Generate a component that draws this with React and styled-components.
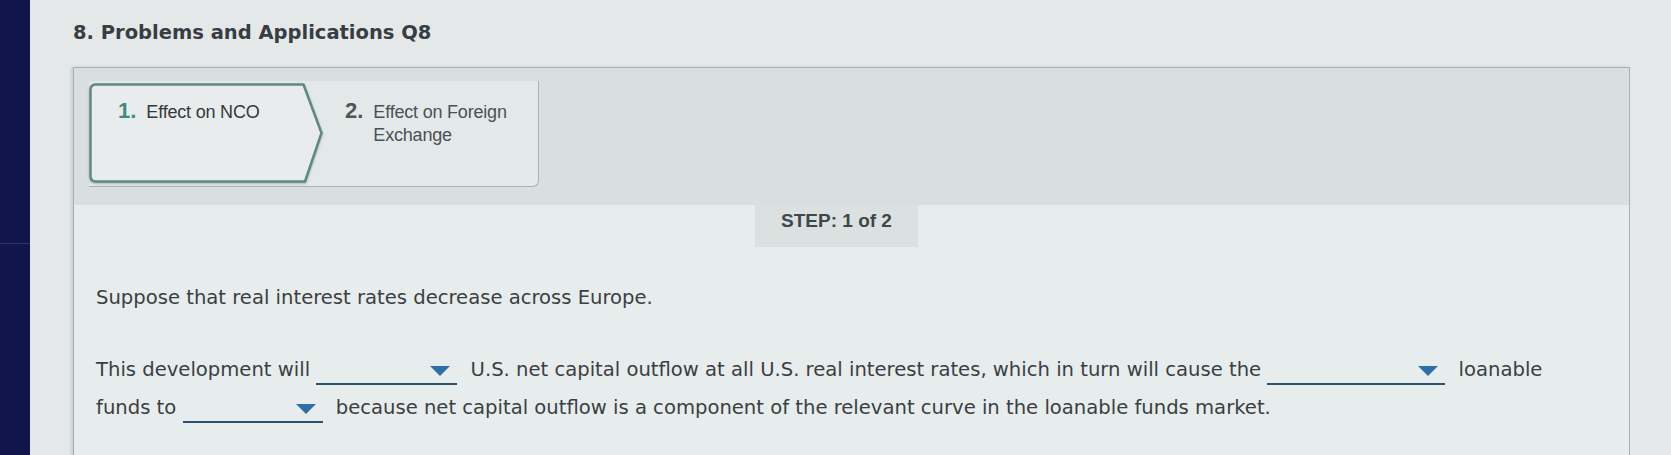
import React from "react";
import styled, { createGlobalStyle } from "styled-components";

const GlobalStyle = createGlobalStyle`
    body {
        margin: 0;
        background: #e4e8e8;
        font-family: "DejaVu Sans", Verdana, sans-serif;
    }
`;

const Page = styled.div`
    display: flex;
    height: 455px;
    overflow: hidden;
`;

const Sidebar = styled.div`
    width: 30px;
    flex-shrink: 0;
    background: #10164a;
    position: relative;

    &::after {
        content: "";
        position: absolute;
        left: 0;
        right: 0;
        top: 243px;
        height: 1px;
        background: #2c3566;
    }
`;

const Main = styled.div`
    flex: 1;
    padding: 21px 41px 0 43px;
    background: #e4e8e8;
`;

const Title = styled.h1`
    margin: 0;
    font-size: 19.5px;
    line-height: 24px;
    font-weight: bold;
    color: #383d42;
`;

const Panel = styled.div`
    margin-top: 22px;
    border: 1px solid #a9b2b2;
    background: #e7ecec;
    box-shadow: -2px 0 3px rgba(0, 0, 0, 0.12);
    min-height: 400px;
`;

const Header = styled.div`
    background: #d9dfdf;
    padding: 13px 0 18px 15px;
`;

const TabStrip = styled.div`
    display: flex;
    width: 450px;
    height: 106px;
    box-sizing: border-box;
    background: #e3e8e8;
    border-right: 1px solid #aab2b2;
    border-bottom: 1px solid #aab2b2;
    border-bottom-right-radius: 6px;
`;

const Tab = styled.div`
    position: relative;
    width: ${(p) => (p.$active ? "235px" : "auto")};
    height: 100px;
    margin-top: 2px;
    margin-left: ${(p) => (p.$active ? "0" : "21px")};
    padding: ${(p) => (p.$active ? "17px 0 0 29px" : "17px 0 0 0")};
    box-sizing: border-box;
    display: flex;
    align-items: flex-start;
`;

const TabShape = styled.svg`
    position: absolute;
    left: 0;
    top: 0;
    filter: drop-shadow(0 1px 1px rgba(0, 0, 0, 0.25));
`;

const TabNum = styled.span`
    position: relative;
    font-family: "Liberation Sans", Arial, sans-serif;
    font-weight: bold;
    font-size: 22px;
    line-height: 22px;
    color: ${(p) => (p.$active ? "#3f8a7d" : "#4f5457")};
    margin-right: 10px;
    white-space: nowrap;
`;

const TabLabel = styled.span`
    position: relative;
    font-family: "Liberation Sans", Arial, sans-serif;
    font-size: 18px;
    line-height: 23px;
    padding-top: 1px;
    color: ${(p) => (p.$active ? "#34393c" : "#4c5154")};
    letter-spacing: -0.2px;
`;

const StepRow = styled.div`
    display: flex;
    padding-left: 681px;
`;

const StepBox = styled.div`
    width: 163px;
    height: 42px;
    box-sizing: border-box;
    padding-top: 5px;
    background: #dbe1e1;
    text-align: center;
    font-family: "Liberation Sans", Arial, sans-serif;
    font-weight: bold;
    font-size: 19px;
    line-height: 22px;
    color: #3d4949;
`;

const Body = styled.div`
    padding: 32px 53px 0 22px;
    color: #3a3f43;
    font-size: 19.6px;
`;

const Para = styled.p`
    margin: 0 0 ${(p) => p.$gap || 0}px;
    line-height: 38px;
`;

const Dropdown = styled.span`
    position: relative;
    display: inline-block;
    width: ${(p) => p.$w}px;
    height: 22px;
    margin-right: 7px;
    border-bottom: 2px solid #2d4f72;
    vertical-align: -9px;
`;

const Caret = styled.span`
    position: absolute;
    right: 7px;
    bottom: 7px;
    width: 0;
    height: 0;
    border-left: 10px solid transparent;
    border-right: 10px solid transparent;
    border-top: 10px solid #2f6ea8;
`;

const ActiveTabShape = () => (
    <TabShape width="235" height="100" viewBox="0 0 235 100">
        <path
            d="M7 1.5 H214.5 L232.5 50 L216 98.5 H7 Q1.5 98.5 1.5 93 V7 Q1.5 1.5 7 1.5 Z"
            fill="#e8ecec"
            stroke="#5d8a81"
            strokeWidth="2.5"
            strokeLinejoin="round"
        />
    </TabShape>
);

const Select = ({ w }) => (
    <Dropdown $w={w}>
        <Caret />
    </Dropdown>
);

const App = () => {
    return (
        <>
            <GlobalStyle />
            <Page>
                <Sidebar />
                <Main>
                    <Title>8. Problems and Applications Q8</Title>
                    <Panel>
                        <Header>
                            <TabStrip>
                                <Tab $active>
                                    <ActiveTabShape />
                                    <TabNum $active>1.</TabNum>
                                    <TabLabel $active>Effect on NCO</TabLabel>
                                </Tab>
                                <Tab>
                                    <TabNum>2.</TabNum>
                                    <TabLabel>
                                        Effect on Foreign
                                        <br />
                                        Exchange
                                    </TabLabel>
                                </Tab>
                            </TabStrip>
                        </Header>
                        <StepRow>
                            <StepBox>STEP: 1 of 2</StepBox>
                        </StepRow>
                        <Body>
                            <Para $gap={34}>Suppose that real interest rates decrease across Europe.</Para>
                            <Para>
                                {"This development will "}
                                <Select w={141} />
                                {" U.S. net capital outflow at all U.S. real interest rates, which in turn will cause the "}
                                <Select w={178} />
                                {" loanable"}
                                {" funds to "}
                                <Select w={140} />
                                {" because net capital outflow is a component of the relevant curve in the loanable funds market."}
                            </Para>
                        </Body>
                    </Panel>
                </Main>
            </Page>
        </>
    );
};

export default App;
